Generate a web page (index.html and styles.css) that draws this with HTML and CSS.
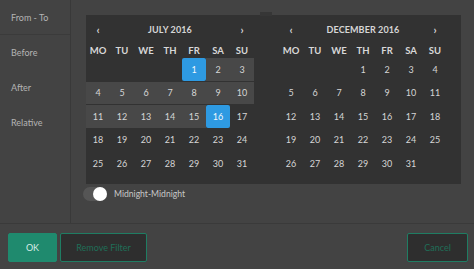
FILE: index.html
```html
<!DOCTYPE html>
<html>
<head>
<meta charset="utf-8">
<link rel="stylesheet" href="styles.css">
</head>
<body>
<div class="app">
  <div class="top">
    <nav class="sidebar">
      <div class="item first">From - To</div>
      <div class="item">Before</div>
      <div class="item">After</div>
      <div class="item">Relative</div>
    </nav>
    <main class="main">
      <div class="tab"></div>
      <div class="panel">
        <div class="cal">
          <div class="head"><span class="nav">&lsaquo;</span><span class="title">JULY 2016</span><span class="nav">&rsaquo;</span></div>
          <div class="week"><span>MO</span><span>TU</span><span>WE</span><span>TH</span><span>FR</span><span>SA</span><span>SU</span></div>
          <div class="days">
            <span class="sel start5">1</span><span class="in">2</span><span class="in">3</span>
            <span class="in">4</span><span class="in">5</span><span class="in">6</span><span class="in">7</span><span class="in">8</span><span class="in">9</span><span class="in">10</span>
            <span class="in">11</span><span class="in">12</span><span class="in">13</span><span class="in">14</span><span class="in">15</span><span class="sel">16</span><span>17</span>
            <span>18</span><span>19</span><span>20</span><span>21</span><span>22</span><span>23</span><span>24</span>
            <span>25</span><span>26</span><span>27</span><span>28</span><span>29</span><span>30</span><span>31</span>
          </div>
        </div>
        <div class="cal">
          <div class="head"><span class="nav">&lsaquo;</span><span class="title">DECEMBER 2016</span><span class="nav">&rsaquo;</span></div>
          <div class="week"><span>MO</span><span>TU</span><span>WE</span><span>TH</span><span>FR</span><span>SA</span><span>SU</span></div>
          <div class="days">
            <span class="start4">1</span><span>2</span><span>3</span><span>4</span>
            <span>5</span><span>6</span><span>7</span><span>8</span><span>9</span><span>10</span><span>11</span>
            <span>12</span><span>13</span><span>14</span><span>15</span><span>16</span><span>17</span><span>18</span>
            <span>19</span><span>20</span><span>21</span><span>22</span><span>23</span><span>24</span><span>25</span>
            <span>26</span><span>27</span><span>28</span><span>29</span><span>30</span><span>31</span>
          </div>
        </div>
      </div>
      <div class="toggle-row">
        <span class="toggle"><span class="knob"></span></span>
        <span class="toggle-label">Midnight-Midnight</span>
      </div>
    </main>
  </div>
  <footer class="footer">
    <button class="btn ok">OK</button>
    <button class="btn ghost">Remove Filter</button>
    <span class="spacer"></span>
    <button class="btn ghost cancel">Cancel</button>
  </footer>
</div>
</body>
</html>
```
FILE: styles.css
```css
* { box-sizing: border-box; }
html, body {
  margin: 0;
  padding: 0;
  width: 474px;
  height: 269px;
  overflow: hidden;
  background: #434343;
  font-family: Lato, "Open Sans", sans-serif;
}
.app {
  display: flex;
  flex-direction: column;
  height: 269px;
}
.top {
  display: flex;
  height: 224px;
  border-bottom: 1px solid #3a3a3a;
}
.sidebar {
  width: 71px;
  border-right: 1px solid #393939;
  display: flex;
  flex-direction: column;
}
.item {
  height: 35px;
  display: flex;
  align-items: center;
  padding-left: 11px;
  font-size: 9px;
  color: #b4b4b4;
}
.item.first {
  border-bottom: 1px solid #3b3b3b;
}
.main {
  position: relative;
  flex: 1;
  padding: 15px 13px 0 15px;
}
.tab {
  position: absolute;
  left: 189px;
  top: 12px;
  width: 12px;
  height: 4px;
  background: #363636;
}
.panel {
  display: flex;
  gap: 25px;
  width: 375px;
  height: 169px;
  background: #323232;
}
.cal {
  width: 168px;
}
.head {
  display: grid;
  grid-template-columns: 24px 1fr 24px;
  height: 29px;
  align-items: center;
  text-align: center;
  color: #d6d6d6;
}
.nav {
  font-size: 11px;
  font-weight: 700;
}
.title {
  font-size: 9px;
  font-weight: 700;
  letter-spacing: 0.1px;
}
.week {
  display: grid;
  grid-template-columns: repeat(7, 24px);
  height: 13px;
  align-items: center;
  text-align: center;
  font-size: 9.5px;
  font-weight: 700;
  color: #d8d8d8;
}
.days {
  display: grid;
  grid-template-columns: repeat(7, 24px);
  grid-auto-rows: 22.5px;
  row-gap: 1px;
  margin-top: 1px;
}
.days span {
  display: flex;
  align-items: center;
  justify-content: center;
  font-size: 9px;
  color: #d6d6d6;
}
.days .in { background: #484848; }
.days .sel {
  background: #2e9ae2;
  color: #f4f8fb;
  border-radius: 2px;
}
.days .start5 { grid-column-start: 5; }
.days .start4 { grid-column-start: 4; }
.toggle-row {
  display: flex;
  align-items: center;
  gap: 7px;
  margin-top: 3px;
  margin-left: -3px;
}
.toggle {
  position: relative;
  width: 24px;
  height: 14px;
  border-radius: 7px;
  background: #555555;
}
.knob {
  position: absolute;
  right: 0;
  top: 0;
  width: 14px;
  height: 14px;
  border-radius: 50%;
  background: #ffffff;
}
.toggle-label {
  font-size: 8.6px;
  color: #c8c8c8;
}
.footer {
  flex: 1;
  display: flex;
  align-items: flex-start;
  gap: 3px;
  padding: 9px 6px 0 8px;
}
.spacer { flex: 1; }
.btn {
  height: 29px;
  margin: 0;
  font-family: Lato, "Open Sans", sans-serif;
  font-size: 9px;
  border-radius: 2px;
  padding: 0;
}
.ok {
  width: 49px;
  background: #1f8a6e;
  border: 1px solid #1f8a6e;
  color: #d8ece6;
}
.ghost {
  width: 87px;
  background: #2e2e2e;
  border: 1.5px solid #1f7d63;
  color: #1f6e58;
}
.cancel {
  width: 61px;
}
```
